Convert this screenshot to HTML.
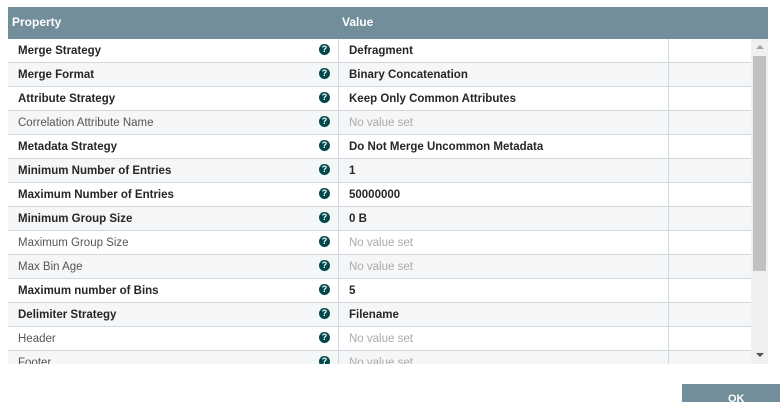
<!DOCTYPE html>
<html><head><style>
body{margin:0;width:780px;height:402px;background:#fff;font-family:"Liberation Sans",Arial,sans-serif;position:relative;overflow:hidden}
.hdr{position:absolute;left:8px;top:7px;width:760px;height:32px;background:#728e9b;color:#fff;font-weight:bold;font-size:12px}
.hdr span{position:absolute;top:8px}
.body{position:absolute;left:8px;top:39px;width:760px;height:325px;overflow:hidden}
.row{position:relative;height:23px;border-bottom:1px solid #cfd9df;font-size:11.5px;width:743px}
.row.g{background:#f4f6f8}
.row div{position:absolute;top:6px}
.p{left:10px;color:#262626}
.b .p,.b .v{font-weight:bold}
.n .p{color:#555}
.v{left:341px;color:#262626}
.nv{color:#aaa!important;font-weight:normal!important}
.row .ic{left:311px;top:5px;width:11px;height:11px;border-radius:50%;background:#004849;color:#fff;font-size:9px;font-weight:bold;text-align:center;line-height:11px}
.c1{position:absolute;left:330px;top:0;bottom:0;border-left:1px solid #cfd9df}
.c2{position:absolute;left:660px;top:0;bottom:0;border-left:1px solid #cfd9df}
.sb{position:absolute;left:743px;top:0;width:17px;height:325px;background:#f0f0f0}
.th{position:absolute;left:2px;top:17px;width:13px;height:215px;background:#c1c1c1}
.ok{position:absolute;left:682px;top:384px;width:98px;height:18px;background:#728e9b;color:#fff;font-size:11px;font-weight:bold;line-height:30px}
</style></head><body>
<div class="hdr"><span style="left:4px">Property</span><span style="left:334px">Value</span></div>
<div class="body">
<div class="row b"><div class="p">Merge Strategy</div><div class="ic">?</div><div class="v">Defragment</div></div>
<div class="row b g"><div class="p">Merge Format</div><div class="ic">?</div><div class="v">Binary Concatenation</div></div>
<div class="row b"><div class="p">Attribute Strategy</div><div class="ic">?</div><div class="v">Keep Only Common Attributes</div></div>
<div class="row n g"><div class="p">Correlation Attribute Name</div><div class="ic">?</div><div class="v nv">No value set</div></div>
<div class="row b"><div class="p">Metadata Strategy</div><div class="ic">?</div><div class="v">Do Not Merge Uncommon Metadata</div></div>
<div class="row b g"><div class="p">Minimum Number of Entries</div><div class="ic">?</div><div class="v">1</div></div>
<div class="row b"><div class="p">Maximum Number of Entries</div><div class="ic">?</div><div class="v">50000000</div></div>
<div class="row b g"><div class="p">Minimum Group Size</div><div class="ic">?</div><div class="v">0 B</div></div>
<div class="row n"><div class="p">Maximum Group Size</div><div class="ic">?</div><div class="v nv">No value set</div></div>
<div class="row n g"><div class="p">Max Bin Age</div><div class="ic">?</div><div class="v nv">No value set</div></div>
<div class="row b"><div class="p">Maximum number of Bins</div><div class="ic">?</div><div class="v">5</div></div>
<div class="row b g"><div class="p">Delimiter Strategy</div><div class="ic">?</div><div class="v">Filename</div></div>
<div class="row n"><div class="p">Header</div><div class="ic">?</div><div class="v nv">No value set</div></div>
<div class="row n g"><div class="p">Footer</div><div class="ic">?</div><div class="v nv">No value set</div></div>
<div class="c1"></div><div class="c2"></div>
<div class="sb"><div style="position:absolute;left:5px;top:6px;border-left:4px solid transparent;border-right:4px solid transparent;border-bottom:4px solid #a3a3a3"></div><div class="th"></div><div style="position:absolute;left:5px;top:314px;border-left:4px solid transparent;border-right:4px solid transparent;border-top:4px solid #505050"></div></div>
</div>
<div class="ok"><span style="position:absolute;left:46px">OK</span></div>
</body></html>
